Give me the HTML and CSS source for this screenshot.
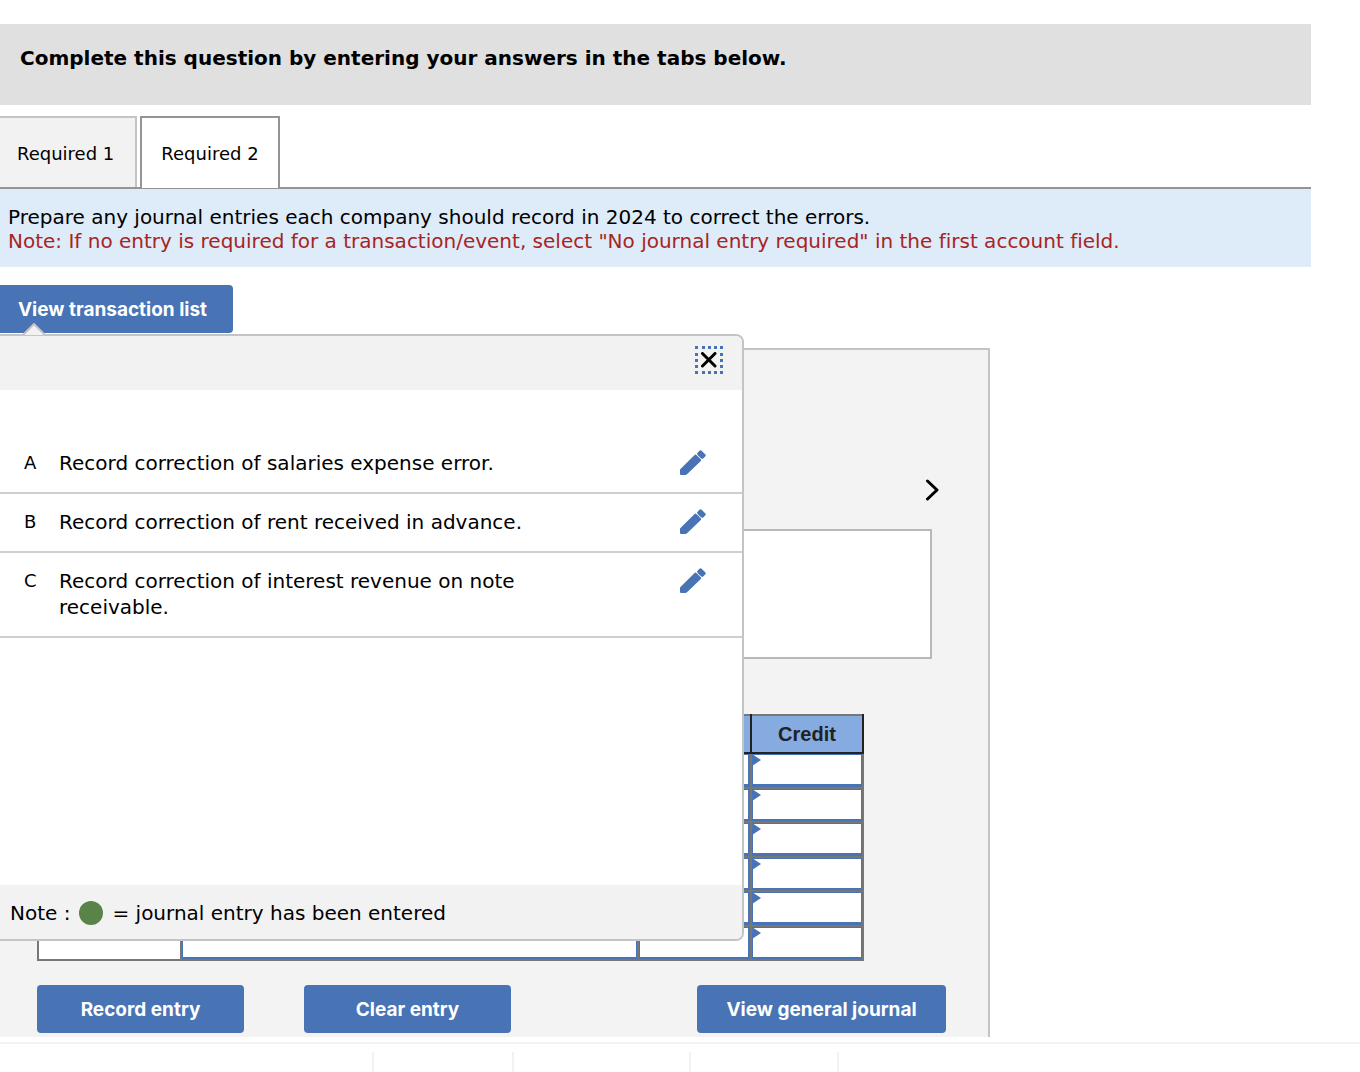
FILE: index.html
```html
<!DOCTYPE html>
<html lang="en">
<head>
    <meta charset="UTF-8">
    <meta name="viewport" content="width=device-width, initial-scale=1.0">
    <title>Journal entry worksheet</title>
    <link rel="stylesheet" href="styles.css">
</head>
<body>
    <svg class="sprite" aria-hidden="true">
        <symbol id="pencil" viewBox="0 0 26 25">
            <path d="M0 19.4 L14.6 4.9 Q15.5 4.1 16.4 4.9 L21 9.5 Q21.6 10.3 20.8 11.1 L7 24.3 Q6.3 25 5.4 25 H1 Q0 25 0 24 Z"/>
            <path d="M16.9 3.5 L19.4 .8 Q20.5 -.2 21.6 .8 L25.2 4.3 Q26.2 5.4 25.2 6.4 L22.6 9 Q20.9 8.5 19.6 7 Q17.8 5.5 16.9 3.5 Z"/>
        </symbol>
    </svg>

    <main class="page">
        <header class="intro">
            <h1>Complete this question by entering your answers in the tabs below.</h1>
        </header>

        <div class="tabs" role="tablist">
            <button type="button" class="tab" role="tab" aria-selected="false">Required 1</button>
            <button type="button" class="tab tab-active" role="tab" aria-selected="true">Required 2</button>
        </div>

        <div class="instructions">
            <p>Prepare any journal entries each company should record in 2024 to correct the errors.</p>
            <p class="warning">Note: If no entry is required for a transaction/event, select "No journal entry required" in the first account field.</p>
        </div>

        <button type="button" class="btn btn-list">View transaction list</button>

        <div class="workspace">
            <section class="worksheet">
                <div class="pager">
                    <button type="button" class="next" aria-label="Next entry">
                        <svg width="14" height="22" viewBox="0 0 14 22"><path d="M2.5 2 L12 11 L2.5 20"/></svg>
                    </button>
                </div>
                <div class="description"></div>

                <table class="journal">
                    <colgroup>
                        <col class="col-date">
                        <col class="col-account">
                        <col class="col-debit">
                        <col class="col-credit">
                    </colgroup>
                    <thead>
                        <tr><th></th><th></th><th></th><th>Credit</th></tr>
                    </thead>
                    <tbody>
                        <tr><td></td><td><input type="text" aria-label="Account 1"></td><td><input type="text" aria-label="Debit 1"></td><td class="marked"><input type="text" aria-label="Credit 1"></td></tr>
                        <tr><td></td><td><input type="text" aria-label="Account 2"></td><td><input type="text" aria-label="Debit 2"></td><td class="marked"><input type="text" aria-label="Credit 2"></td></tr>
                        <tr><td></td><td><input type="text" aria-label="Account 3"></td><td><input type="text" aria-label="Debit 3"></td><td class="marked"><input type="text" aria-label="Credit 3"></td></tr>
                        <tr><td></td><td><input type="text" aria-label="Account 4"></td><td><input type="text" aria-label="Debit 4"></td><td class="marked"><input type="text" aria-label="Credit 4"></td></tr>
                        <tr><td></td><td><input type="text" aria-label="Account 5"></td><td><input type="text" aria-label="Debit 5"></td><td class="marked"><input type="text" aria-label="Credit 5"></td></tr>
                        <tr><td></td><td><input type="text" aria-label="Account 6"></td><td><input type="text" aria-label="Debit 6"></td><td class="marked"><input type="text" aria-label="Credit 6"></td></tr>
                    </tbody>
                </table>

                <div class="actions">
                    <button type="button" class="btn">Record entry</button>
                    <button type="button" class="btn">Clear entry</button>
                    <button type="button" class="btn btn-journal">View general journal</button>
                </div>
            </section>

            <!-- transaction list, opens over the worksheet -->
            <div class="popup" role="dialog" aria-label="Transaction list">
                <svg class="popup-arrow" width="24" height="13" viewBox="0 0 24 13"><path d="M1 12 L12 1 L23 12"/></svg>
                <div class="popup-head">
                    <button type="button" class="close" aria-label="Close">
                        <svg width="16" height="16" viewBox="0 0 16 16"><path d="M1.5 1.5 L14 14 M14 1.5 L1.5 14"/></svg>
                    </button>
                </div>
                <ul class="transactions">
                    <li>
                        <span class="letter">A</span>
                        <span class="label">Record correction of salaries expense error.</span>
                        <button type="button" class="edit" aria-label="Edit A"><svg width="26" height="25"><use href="#pencil"/></svg></button>
                    </li>
                    <li>
                        <span class="letter">B</span>
                        <span class="label">Record correction of rent received in advance.</span>
                        <button type="button" class="edit" aria-label="Edit B"><svg width="26" height="25"><use href="#pencil"/></svg></button>
                    </li>
                    <li>
                        <span class="letter">C</span>
                        <span class="label">Record correction of interest revenue on note receivable.</span>
                        <button type="button" class="edit" aria-label="Edit C"><svg width="26" height="25"><use href="#pencil"/></svg></button>
                    </li>
                </ul>
                <div class="popup-foot">
                    <span>Note :</span>
                    <span class="dot"></span>
                    <span>= journal entry has been entered</span>
                </div>
            </div>
        </div>
    </main>

    <footer class="bottom-bar">
        <div></div>
        <div></div>
        <div></div>
        <div></div>
        <div></div>
    </footer>
</body>
</html>
```

FILE: styles.css
```css
* {
    margin: 0;
    padding: 0;
    box-sizing: border-box;
}

body {
    background: #fff;
    color: #000;
    font-family: Verdana, "DejaVu Sans", sans-serif;
    font-size: 20px;
    font-variant-ligatures: none;
    line-height: 24px;
}

button {
    font: inherit;
    color: inherit;
    border: none;
    background: none;
    cursor: pointer;
}

svg {
    display: block;
}

.sprite {
    display: none;
}

.page {
    padding-top: 24px;
}

.intro {
    margin-right: 49px;
    padding: 22px 20px 35px;
    background: #e0e0e0;
}

h1 {
    font-size: 20px;
    line-height: 24px;
}

.tabs {
    display: flex;
    gap: 3px;
    margin: 11px 49px 0 0;
    border-bottom: 2px solid #949494;
}

.tab {
    height: 71px;
    padding: 2px 19px 0;
    border: 2px solid #949494;
    border-bottom: none;
    font-size: 18px;
}

.tab:first-child {
    padding-left: 17px;
    padding-right: 21px;
    border-color: #c4c4c4;
    border-left: none;
    background: #f2f2f2;
}

.tab-active {
    height: 72px;
    margin-bottom: -1px;
    background: #fff;
}

.instructions {
    margin-right: 49px;
    padding: 16px 8px 14px;
    background: #deebf8;
}

.warning {
    color: #a82424;
}

.btn {
    min-width: 207px;
    height: 48px;
    padding-top: 2px;
    border-radius: 4px;
    background: #4873b4;
    color: #fff;
    font-family: Inter, Roboto, sans-serif;
    font-size: 19px;
    font-weight: 700;
}

.btn-list {
    display: block;
    min-width: 233px;
    margin-top: 18px;
    padding-right: 8px;
    border-radius: 0 4px 4px 0;
}

.workspace {
    position: relative;
    padding-top: 15px;
}

.worksheet {
    max-width: 990px;
    padding: 0 42px 4px 37px;
    border: 2px solid #c4c4c4;
    border-width: 2px 2px 0 0;
    background: #f3f3f3;
}

.pager {
    display: flex;
    justify-content: flex-end;
    padding: 129px 7px 28px 0;
}

.next path {
    fill: none;
    stroke: #000;
    stroke-width: 3;
    stroke-linecap: round;
    stroke-linejoin: round;
}

.description {
    height: 130px;
    margin-right: 14px;
    border: 2px solid #b8b8b8;
    background: #fff;
}

.journal {
    width: 827px;
    height: 247px;
    margin-top: 55px;
    table-layout: fixed;
    border-collapse: collapse;
    background: #fff;
}

.col-date {
    width: 143px;
}

.col-account {
    width: 457px;
}

.col-debit {
    width: 113px;
}

.journal th {
    height: 38px;
    border: 2px solid #222;
    border-top-color: #777;
    background: #85abe0;
    color: #222;
    font-family: "Liberation Sans", Arial, sans-serif;
    font-size: 20px;
    line-height: 24px;
}

.journal td {
    border: 2px solid #777;
    background: #4873b4;
}

.journal td:first-child {
    background: #fff;
}

.journal input {
    display: block;
    width: 100%;
    height: 32px;
    border: 1px solid #4873b4;
    border-bottom-width: 2px;
    border-radius: 0;
    background: #fff;
    outline: none;
}

.journal td:nth-child(3) input {
    border-right-width: 2px;
}

/* corner flag on the amount cells */
.marked {
    position: relative;
}

.marked::before {
    content: '';
    position: absolute;
    top: 0;
    left: 0;
    border-left: 9px solid #4873b4;
    border-top: 6px solid transparent;
    border-bottom: 6px solid transparent;
}

.actions {
    display: flex;
    gap: 60px;
    margin-top: 24px;
}

.btn-journal {
    min-width: 249px;
    margin-left: auto;
}

.popup {
    position: absolute;
    top: 1px;
    left: 0;
    display: flex;
    flex-direction: column;
    width: 744px;
    max-width: 100%;
    height: 607px;
    border: 2px solid #c4c4c4;
    border-left: none;
    border-radius: 0 8px 8px 0;
    background: #fff;
}

.popup-arrow {
    position: absolute;
    top: -13px;
    left: 22px;
    fill: #f2f2f2;
    stroke: #c4c4c4;
    stroke-width: 2;
}

.popup-head {
    display: flex;
    justify-content: flex-end;
    height: 54px;
    padding: 10px 19px 0 0;
    border-radius: 0 6px 0 0;
    background: #f2f2f2;
}

.close {
    display: flex;
    justify-content: center;
    align-items: center;
    width: 28px;
    height: 28px;
    border: 3px dotted #4873b4;
}

.close path {
    fill: none;
    stroke: #000;
    stroke-width: 3;
    stroke-linecap: round;
}

.transactions {
    flex: 1;
    padding-top: 45px;
    list-style: none;
}

.transactions li {
    display: flex;
    align-items: flex-start;
    padding: 15px 36px 16px 24px;
    border-bottom: 2px solid #cfcfcf;
    line-height: 26px;
}

.letter {
    width: 35px;
    font-size: 18px;
}

.label {
    width: 500px;
}

.edit {
    margin-left: auto;
    fill: #4873b4;
}

.popup-foot {
    display: flex;
    align-items: center;
    gap: 9px;
    height: 54px;
    padding: 2px 0 0 10px;
    border-radius: 0 0 6px 0;
    background: #f2f2f2;
}

.dot {
    width: 24px;
    height: 24px;
    border-radius: 50%;
    background: #598348;
}

.bottom-bar {
    display: grid;
    grid-template-columns: 374px 140px 177px 148px 1fr;
    margin-top: 5px;
    padding-top: 8px;
    border-top: 2px solid #f2f2f2;
}

.bottom-bar div {
    height: 20px;
    border-right: 2px solid #f2f2f2;
}

.bottom-bar div:last-child {
    border-right: none;
}
```
